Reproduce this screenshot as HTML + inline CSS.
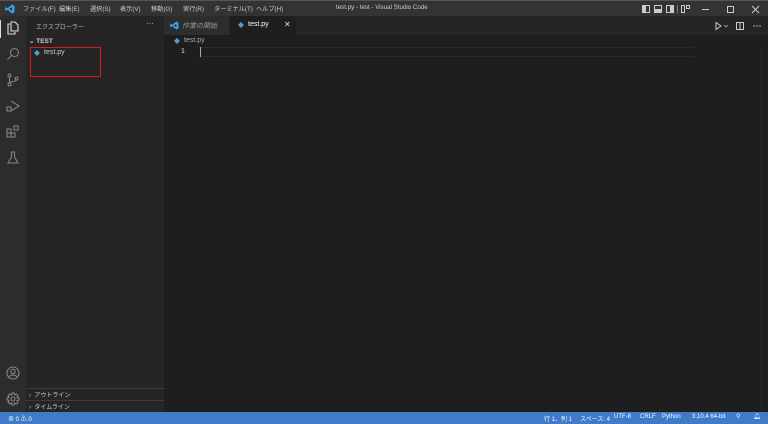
<!DOCTYPE html>
<html><head><meta charset="utf-8"><style>
*{margin:0;padding:0;box-sizing:border-box}
body{width:768px;height:424px;background:#1e1e1e;font-family:"Liberation Sans","Noto Sans CJK JP",sans-serif;position:relative;overflow:hidden;color:#ccc}
.abs{position:absolute}
#title{left:0;top:0;width:768px;height:16px;background:#333333;border-top:1px solid #555}
#title .m{position:absolute;top:3px;font-size:6.2px;color:#ccc;white-space:nowrap}
#act{left:0;top:16px;width:26px;height:396px;background:#2c2c2c}
#side{left:26px;top:16px;width:138px;height:396px;background:#252526}
#tabs{left:164px;top:16px;width:604px;height:19px;background:#252526}
#status{left:0;top:412px;width:768px;height:12px;background:#3f7bc9;color:#fff;font-size:6px}
#status span{white-space:nowrap}
svg{position:absolute}
</style></head><body>
<div id="title" class="abs">
<svg style="left:5px;top:3px" width="10" height="10" viewBox="0 0 10 10"><path d="M7 0.5 L9.5 1.8 V8.2 L7 9.5 L2.5 5.8 L1 7 L0.3 6.5 V3.5 L1 3 L2.5 4.2 Z M7 3 L4.3 5 L7 7 Z" fill="#3c9ee8"/></svg>
<span class="m" style="left:23px">ファイル(F)</span>
<span class="m" style="left:59px">編集(E)</span>
<span class="m" style="left:90px">選択(S)</span>
<span class="m" style="left:120px">表示(V)</span>
<span class="m" style="left:151px">移動(G)</span>
<span class="m" style="left:183px">実行(R)</span>
<span class="m" style="left:214px">ターミナル(T)</span>
<span class="m" style="left:256px">ヘルプ(H)</span>
<span class="m" style="left:336px">test.py - test - Visual Studio Code</span>
<svg style="left:642px;top:4px" width="60" height="8"><rect x="0.5" y="0.5" width="7" height="7" fill="none" stroke="#ccc"/><rect x="1" y="1" width="3" height="6" fill="#ccc"/><rect x="12.5" y="0.5" width="7" height="7" fill="none" stroke="#ccc"/><rect x="13" y="4" width="6" height="3" fill="#ccc"/><rect x="24.5" y="0.5" width="7" height="7" fill="none" stroke="#ccc"/><rect x="28" y="1" width="3" height="6" fill="#ccc"/><line x1="35.5" y1="0" x2="35.5" y2="8" stroke="#777"/><rect x="39.5" y="0.5" width="3" height="7" fill="none" stroke="#ccc"/><rect x="44.5" y="0.5" width="3" height="3" fill="none" stroke="#ccc"/></svg>
<svg style="left:700px;top:3px" width="68" height="10"><line x1="2" y1="5.5" x2="9" y2="5.5" stroke="#ccc"/><rect x="27.5" y="2.5" width="6" height="6" fill="none" stroke="#ccc"/><path d="M52 2 L59 9 M59 2 L52 9" stroke="#ccc"/></svg>
</div>
<div id="act" class="abs">
<div class="abs" style="left:0;top:4px;width:1px;height:18px;background:#ddd"></div>
<svg style="left:6px;top:5px" width="14" height="14" viewBox="0 0 14 14" fill="none" stroke="#ddd" stroke-width="1.1"><path d="M4 3 H2 V13 H9 V11"/><path d="M5 1 H9 L12 4 V10 H5 Z"/></svg>
<svg style="left:6px;top:31px" width="14" height="14" viewBox="0 0 14 14" fill="none" stroke="#858585" stroke-width="1.1"><circle cx="8.5" cy="5.5" r="4"/><path d="M5.5 8.5 L1.5 12.5"/></svg>
<svg style="left:6px;top:57px" width="14" height="14" viewBox="0 0 14 14" fill="none" stroke="#858585" stroke-width="1.1"><circle cx="3.5" cy="2.5" r="1.5"/><circle cx="3.5" cy="11.5" r="1.5"/><circle cx="10.5" cy="5.5" r="1.5"/><path d="M3.5 4 V10 M10.5 7 C10.5 9 4 8 3.5 10"/></svg>
<svg style="left:6px;top:83px" width="14" height="14" viewBox="0 0 14 14" fill="none" stroke="#858585" stroke-width="1.1"><path d="M5 2 L13 7 L5 12"/><rect x="1" y="8" width="4" height="4"/></svg>
<svg style="left:6px;top:109px" width="14" height="14" viewBox="0 0 14 14" fill="none" stroke="#858585" stroke-width="1.1"><rect x="1" y="4" width="4" height="4"/><rect x="1" y="8" width="4" height="4"/><rect x="5" y="8" width="4" height="4"/><rect x="8" y="1" width="4" height="4"/></svg>
<svg style="left:6px;top:135px" width="14" height="14" viewBox="0 0 14 14" fill="none" stroke="#858585" stroke-width="1.1"><path d="M5 1 H9 M5.5 1 V6 L2 12 H12 L8.5 6 V1"/></svg>
<svg style="left:6px;top:350px" width="14" height="14" viewBox="0 0 14 14" fill="none" stroke="#858585" stroke-width="1.1"><circle cx="7" cy="7" r="6"/><circle cx="7" cy="5.5" r="2.2"/><path d="M3 11 C4.5 8.5 9.5 8.5 11 11"/></svg>
<svg style="left:6px;top:376px" width="14" height="14" viewBox="0 0 14 14" fill="none" stroke="#858585" stroke-width="1.1"><circle cx="7" cy="7" r="2"/><path d="M6 1 H8 L8.5 3 L10.3 2 L12 3.7 L11 5.5 L13 6 V8 L11 8.5 L12 10.3 L10.3 12 L8.5 11 L8 13 H6 L5.5 11 L3.7 12 L2 10.3 L3 8.5 L1 8 V6 L3 5.5 L2 3.7 L3.7 2 L5.5 3 Z"/></svg>
</div>
<div id="side" class="abs">
<div class="abs" style="left:10px;top:6px;font-size:6px;color:#bbb">エクスプローラー</div>
<div class="abs" style="left:120px;top:3px;font-size:8px;color:#ccc">···</div>
<div class="abs" style="left:3px;top:21px;font-size:6.5px;color:#ccc;font-weight:bold">⌄ TEST</div>
<svg style="left:8px;top:34px" width="6" height="6"><path d="M3 0 L6 3 L3 6 L0 3 Z" fill="#4a9fd8"/></svg>
<div class="abs" style="left:18px;top:33px;font-size:7px;color:#ccc">test.py</div>
<div class="abs" style="left:4px;top:31px;width:71px;height:30px;border:1.3px solid #e01818"></div>
<div class="abs" style="left:0;top:372px;width:138px;height:1px;background:#3c3c3c"></div>
<div class="abs" style="left:3px;top:374px;font-size:6px;color:#ccc">›&nbsp; アウトライン</div>
<div class="abs" style="left:0;top:384px;width:138px;height:1px;background:#3c3c3c"></div>
<div class="abs" style="left:3px;top:386px;font-size:6px;color:#ccc">›&nbsp; タイムライン</div>
</div>
<div id="tabs" class="abs">
<div class="abs" style="left:0;top:0;width:66px;height:19px;background:#2d2d2d;border-right:1px solid #252526"></div>
<svg style="left:6px;top:5px" width="9" height="9" viewBox="0 0 10 10"><path d="M7 0.5 L9.5 1.8 V8.2 L7 9.5 L2.5 5.8 L1 7 L0.3 6.5 V3.5 L1 3 L2.5 4.2 Z M7 3 L4.3 5 L7 7 Z" fill="#3c9ee8"/></svg>
<div class="abs" style="left:18px;top:5px;font-size:7px;color:#999;font-style:italic">作業の開始</div>
<div class="abs" style="left:66px;top:0;width:66px;height:19px;background:#1e1e1e"></div>
<svg style="left:74px;top:6px" width="6" height="6"><path d="M3 0 L6 3 L3 6 L0 3 Z" fill="#4a9fd8"/></svg>
<div class="abs" style="left:84px;top:5px;font-size:7px;color:#fff">test.py</div>
<div class="abs" style="left:120px;top:4px;font-size:8px;color:#ddd">✕</div>
<svg style="left:551px;top:6px" width="52" height="8"><path d="M1 0.5 L6 4 L1 7.5 Z" fill="none" stroke="#ccc"/><path d="M9 3 L11 5 L13 3" fill="none" stroke="#aaa" stroke-width=".8"/><rect x="21.5" y="0.5" width="7" height="7" fill="none" stroke="#ccc"/><line x1="25" y1="0.5" x2="25" y2="7.5" stroke="#ccc"/><circle cx="39" cy="4" r=".7" fill="#ccc"/><circle cx="42" cy="4" r=".7" fill="#ccc"/><circle cx="45" cy="4" r=".7" fill="#ccc"/></svg>
</div>
<svg style="left:174px;top:38px" width="6" height="6"><path d="M3 0 L6 3 L3 6 L0 3 Z" fill="#4a9fd8"/></svg>
<div class="abs" style="left:184px;top:37px;font-size:7px;color:#aaa">test.py</div>
<div class="abs" style="left:181px;top:48px;font-size:7px;color:#ddd">1</div>
<div class="abs" style="left:198px;top:47px;width:496px;height:10px;border-top:1px solid #2b2b2b;border-bottom:1px solid #2b2b2b"></div>
<div class="abs" style="left:200px;top:47px;width:1px;height:10px;background:#aaa"></div>
<div class="abs" style="left:761px;top:47px;width:1px;height:365px;background:#2a2a2a"></div>
<div id="status" class="abs">
<span class="abs" style="left:8px;top:2px">⊗ 0 ⚠ 0</span>
<span class="abs" style="left:544px;top:2px">行 1、列 1</span>
<span class="abs" style="left:580px;top:2px">スペース: 4</span>
<span class="abs" style="left:614px;top:2px">UTF-8</span>
<span class="abs" style="left:640px;top:2px">CRLF</span>
<span class="abs" style="left:662px;top:2px">Python</span>
<span class="abs" style="left:692px;top:2px">3.10.4 64-bit</span>
<span class="abs" style="left:736px;top:1px">⚲</span>
<span class="abs" style="left:753px;top:1px">🔔︎</span>
</div>
</body></html>
